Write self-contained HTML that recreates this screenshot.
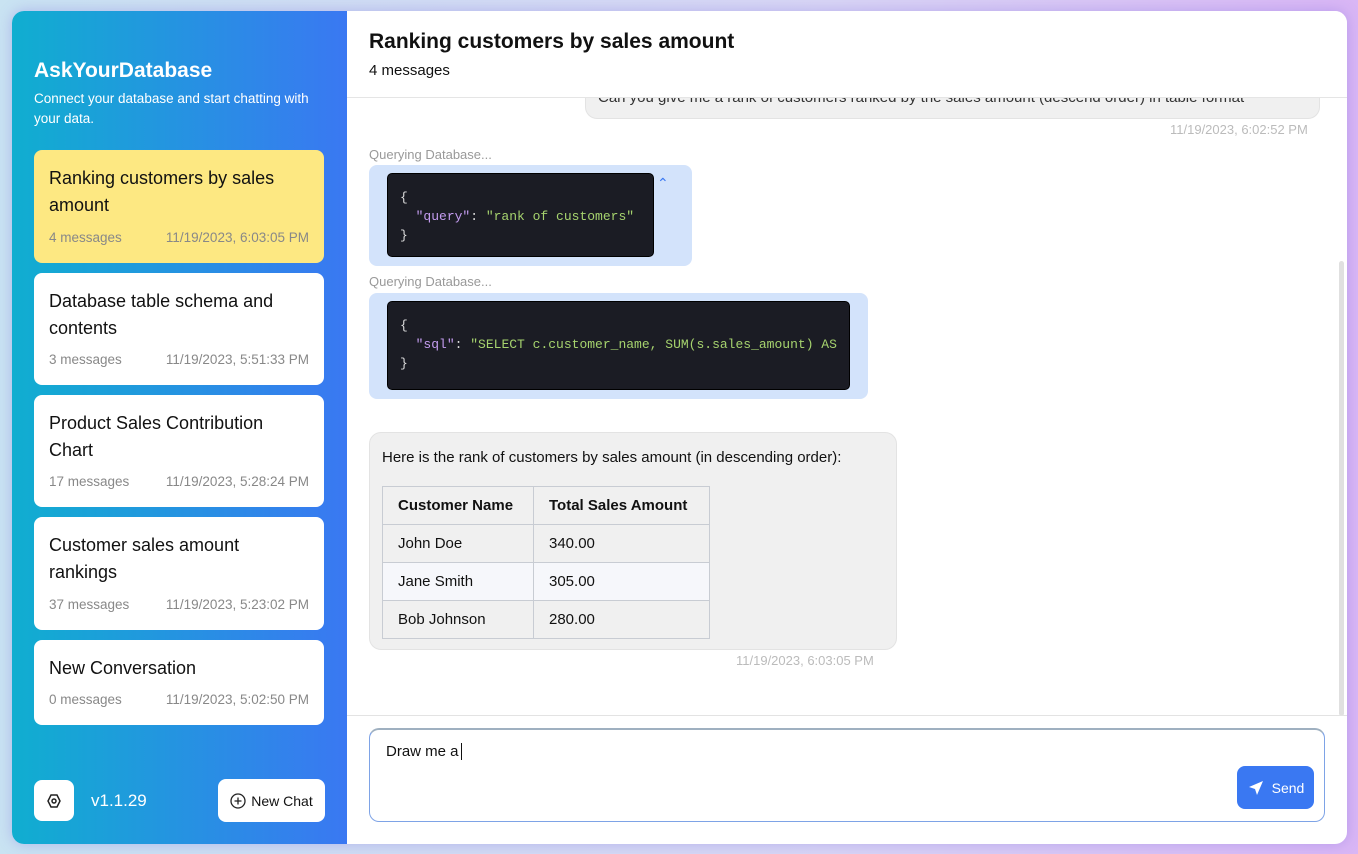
<!DOCTYPE html>
<html><head><meta charset="utf-8"><style>
*{box-sizing:border-box;margin:0;padding:0}
body{width:1358px;height:854px;overflow:hidden;font-family:"Liberation Sans",sans-serif;background:linear-gradient(90deg,#c9e3f2,#d8d6f5 60%,#d9b6f5);position:relative}
.app{position:absolute;left:12px;top:11px;width:1335px;height:833px;border-radius:12px;overflow:hidden;background:#fff;box-shadow:0 0 14px rgba(120,100,220,.35)}
.side{position:absolute;left:0;top:0;width:335px;height:100%;background:linear-gradient(90deg,#10aed0,#3a78f2)}
.side h1{position:absolute;left:22px;top:48px;color:#fff;font-size:21px;font-weight:bold}
.side .sub{position:absolute;left:22px;top:78px;width:300px;color:#fff;font-size:13.5px;line-height:20px}
.card{position:absolute;left:22px;width:290px;background:#fff;border-radius:8px;padding:0 15px}
.card .t{font-size:18px;line-height:27px;color:#111;margin-top:15px}
.card .m{position:absolute;left:15px;right:15px;bottom:18px;font-size:13.5px;color:#888;display:flex;justify-content:space-between}
.main{position:absolute;left:335px;top:0;right:0;height:100%}
.hdr{position:absolute;left:0;right:0;top:0;height:87px;border-bottom:1px solid #e5e5e5;background:#fff;z-index:2}
.hdr h2{position:absolute;left:22px;top:19px;font-size:21px;font-weight:bold;color:#111}
.hdr p{position:absolute;left:22px;top:51px;font-size:15px;color:#111}
.gray{color:#999;font-size:13px;position:absolute}
.blue{position:absolute;background:#d3e3fb;border-radius:8px}
.code{position:absolute;background:#1b1c24;border-radius:5px;font-family:"Liberation Mono",monospace;font-size:13px;color:#ddd;line-height:19px;padding:14px 12px;white-space:pre;overflow:hidden;border:1px solid #000}
.k{color:#c49cf0}.s{color:#a6d36e}
table{border-collapse:collapse;font-size:15px;color:#111}
td,th{border:1px solid #c8ccd3;height:38px;padding:0 15px;text-align:left}
</style></head><body>
<div class="app">
<div class="side">
<h1>AskYourDatabase</h1>
<div class="sub">Connect your database and start chatting with your data.</div>
<div class="card" style="top:139px;height:113px;background:#fde882"><div class="t">Ranking customers by sales amount</div><div class="m"><span>4 messages</span><span>11/19/2023, 6:03:05 PM</span></div></div>
<div class="card" style="top:262px;height:112px"><div class="t">Database table schema and contents</div><div class="m"><span>3 messages</span><span>11/19/2023, 5:51:33 PM</span></div></div>
<div class="card" style="top:384px;height:112px"><div class="t">Product Sales Contribution Chart</div><div class="m"><span>17 messages</span><span>11/19/2023, 5:28:24 PM</span></div></div>
<div class="card" style="top:506px;height:113px"><div class="t">Customer sales amount rankings</div><div class="m"><span>37 messages</span><span>11/19/2023, 5:23:02 PM</span></div></div>
<div class="card" style="top:629px;height:85px"><div class="t">New Conversation</div><div class="m"><span>0 messages</span><span>11/19/2023, 5:02:50 PM</span></div></div>
<div style="position:absolute;left:22px;top:769px;width:40px;height:41px;background:#fff;border-radius:8px;display:flex;align-items:center;justify-content:center"><svg width="16" height="16" viewBox="0 0 16 16"><path d="M5 2h6l3 6-3 6H5L2 8z" fill="none" stroke="#222" stroke-width="1.5"/><circle cx="8" cy="8" r="2" fill="none" stroke="#222" stroke-width="1.5"/></svg></div>
<div style="position:absolute;left:79px;top:780px;color:#fff;font-size:17px">v1.1.29</div>
<div style="position:absolute;left:206px;top:768px;width:107px;height:43px;background:#fff;border-radius:8px;font-size:14px;color:#111;display:flex;align-items:center;justify-content:center;gap:5px"><svg width="16" height="16" viewBox="0 0 16 16"><circle cx="8" cy="8" r="7" fill="none" stroke="#222" stroke-width="1.3"/><path d="M8 4.5v7M4.5 8h7" stroke="#222" stroke-width="1.3"/></svg>New Chat</div>
</div>
<div class="main">
<div class="hdr"><h2>Ranking customers by sales amount</h2><p>4 messages</p></div>
<div style="position:absolute;left:238px;top:60px;width:735px;height:48px;background:#f0f0f0;border:1px solid #e3e3e3;border-radius:12px;padding:17px 12px;font-size:15px;color:#333;overflow:hidden;white-space:nowrap">Can you give me a rank of customers ranked by the sales amount (descend order) in table format</div>
<div class="gray" style="left:823px;top:111px;color:#bbb">11/19/2023, 6:02:52 PM</div>
<div class="gray" style="left:22px;top:136px">Querying Database...</div>
<div class="blue" style="left:22px;top:154px;width:323px;height:101px"></div>
<div class="code" style="left:40px;top:162px;width:267px;height:84px">{
  <span class="k">"query"</span>: <span class="s">"rank of customers"</span>
}</div>
<div style="position:absolute;left:310px;top:164px;color:#3a78f2;font-size:14px">&#8963;</div>
<div class="gray" style="left:22px;top:263px">Querying Database...</div>
<div class="blue" style="left:22px;top:282px;width:499px;height:106px"></div>
<div class="code" style="left:40px;top:290px;width:463px;height:89px;padding-top:14px">{
  <span class="k">"sql"</span>: <span class="s">"SELECT c.customer_name, SUM(s.sales_amount) AS</span>
}</div>
<div style="position:absolute;left:22px;top:421px;width:528px;height:218px;background:#f0f0f0;border:1px solid #e3e3e3;border-radius:12px;padding:16px 12px">
<div style="font-size:15px;color:#111;margin-bottom:20px">Here is the rank of customers by sales amount (in descending order):</div>
<table><tr><th style="width:151px">Customer Name</th><th style="width:176px">Total Sales Amount</th></tr>
<tr><td>John Doe</td><td>340.00</td></tr>
<tr style="background:#f6f7fb"><td>Jane Smith</td><td>305.00</td></tr>
<tr><td>Bob Johnson</td><td>280.00</td></tr></table>
</div>
<div class="gray" style="left:389px;top:642px;color:#bbb">11/19/2023, 6:03:05 PM</div>
<div style="position:absolute;left:992px;top:250px;width:5px;height:455px;background:#e0e0e0;border-radius:3px"></div>
<div style="position:absolute;left:0;right:0;top:704px;border-top:1px solid #e3e3e3"></div>
<div style="position:absolute;left:22px;top:717px;width:956px;height:94px;border:1px solid #7ea3e6;border-top:2px solid #9fb0c0;border-radius:10px;padding:13px 16px;font-size:15px;color:#111">Draw me a <span style="border-left:1px solid #111;margin-left:2px"></span></div>
<div style="position:absolute;left:890px;top:755px;width:77px;height:43px;background:#3a78f2;border-radius:8px;color:#fff;font-size:14px;display:flex;align-items:center;justify-content:center;gap:7px"><svg width="18" height="18" viewBox="0 0 18 18"><path d="M16 2L2 8l6 2 2 6z" fill="#fff"/></svg>Send</div>
</div>
</div>
</body></html>
